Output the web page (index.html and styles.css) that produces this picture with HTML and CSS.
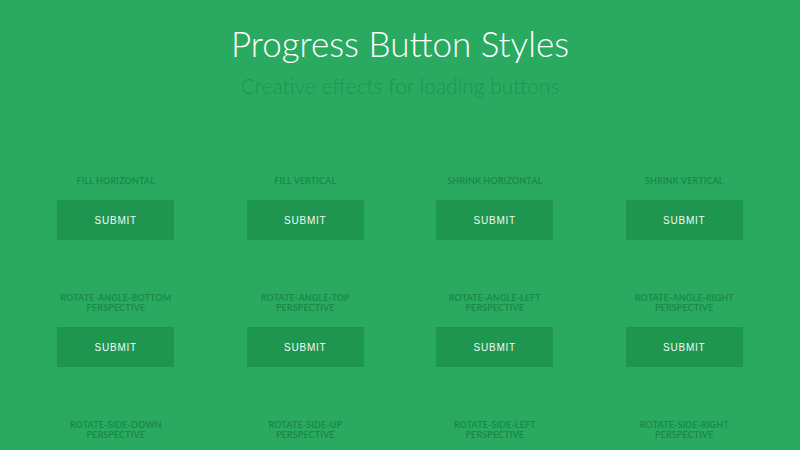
FILE: index.html
```html
<!DOCTYPE html>
<html lang="en">
<head>
    <meta charset="UTF-8">
    <meta name="viewport" content="width=device-width, initial-scale=1.0">
    <title>Progress Button Styles</title>
    <link rel="stylesheet" href="styles.css">
</head>
<body>
    <header class="header">
        <h1>Progress Button Styles</h1>
        <p class="subtitle">Creative effects for loading buttons</p>
    </header>
    <div class="buttons">
        <div class="box">
            <p class="label">Fill horizontal</p>
            <button class="btn">Submit</button>
        </div>
        <div class="box">
            <p class="label">Fill vertical</p>
            <button class="btn">Submit</button>
        </div>
        <div class="box">
            <p class="label">Shrink horizontal</p>
            <button class="btn">Submit</button>
        </div>
        <div class="box">
            <p class="label">Shrink vertical</p>
            <button class="btn">Submit</button>
        </div>
        <div class="box">
            <p class="label">Rotate-angle-bottom<br>perspective</p>
            <button class="btn">Submit</button>
        </div>
        <div class="box">
            <p class="label">Rotate-angle-top<br>perspective</p>
            <button class="btn">Submit</button>
        </div>
        <div class="box">
            <p class="label">Rotate-angle-left<br>perspective</p>
            <button class="btn">Submit</button>
        </div>
        <div class="box">
            <p class="label">Rotate-angle-right<br>perspective</p>
            <button class="btn">Submit</button>
        </div>
        <div class="box">
            <p class="label">Rotate-side-down<br>perspective</p>
            <button class="btn">Submit</button>
        </div>
        <div class="box">
            <p class="label">Rotate-side-up<br>perspective</p>
            <button class="btn">Submit</button>
        </div>
        <div class="box">
            <p class="label">Rotate-side-left<br>perspective</p>
            <button class="btn">Submit</button>
        </div>
        <div class="box">
            <p class="label">Rotate-side-right<br>perspective</p>
            <button class="btn">Submit</button>
        </div>
    </div>
</body>
</html>
```

FILE: styles.css
```css
body {
    font-family: Lato, "Open Sans", sans-serif;
    margin: 0;
    background-color: #2aaa60;
    color: #fff;
    text-align: center;
    height: 100vh;
    overflow: hidden;
}
.header {
    padding-top: 21px;
}
.header h1 {
    font-size: 35px;
    font-weight: 300;
    margin: 0;
    line-height: 44px;
}
.subtitle {
    font-size: 21px;
    font-weight: 300;
    color: #1d9650;
    margin: 7px 0 0;
    line-height: 28px;
}
.buttons {
    width: 758px;
    margin: 53px auto 0;
    display: grid;
    grid-template-columns: repeat(4, 1fr);
    row-gap: 40px;
}
.box {
    display: flex;
    flex-direction: column;
    justify-content: flex-end;
    align-items: center;
    height: 87px;
}
.label {
    font-size: 9px;
    font-weight: 700;
    text-transform: uppercase;
    letter-spacing: 0.1px;
    line-height: 10px;
    color: #1a8a48;
    margin: 0 0 14px;
}
.btn {
    width: 117px;
    height: 40px;
    border: none;
    background-color: #1f9650;
    color: #f2fbf5;
    font-family: "Liberation Sans", Arial, sans-serif;
    font-size: 10px;
    letter-spacing: 0.8px;
    text-transform: uppercase;
    cursor: pointer;
}
```
